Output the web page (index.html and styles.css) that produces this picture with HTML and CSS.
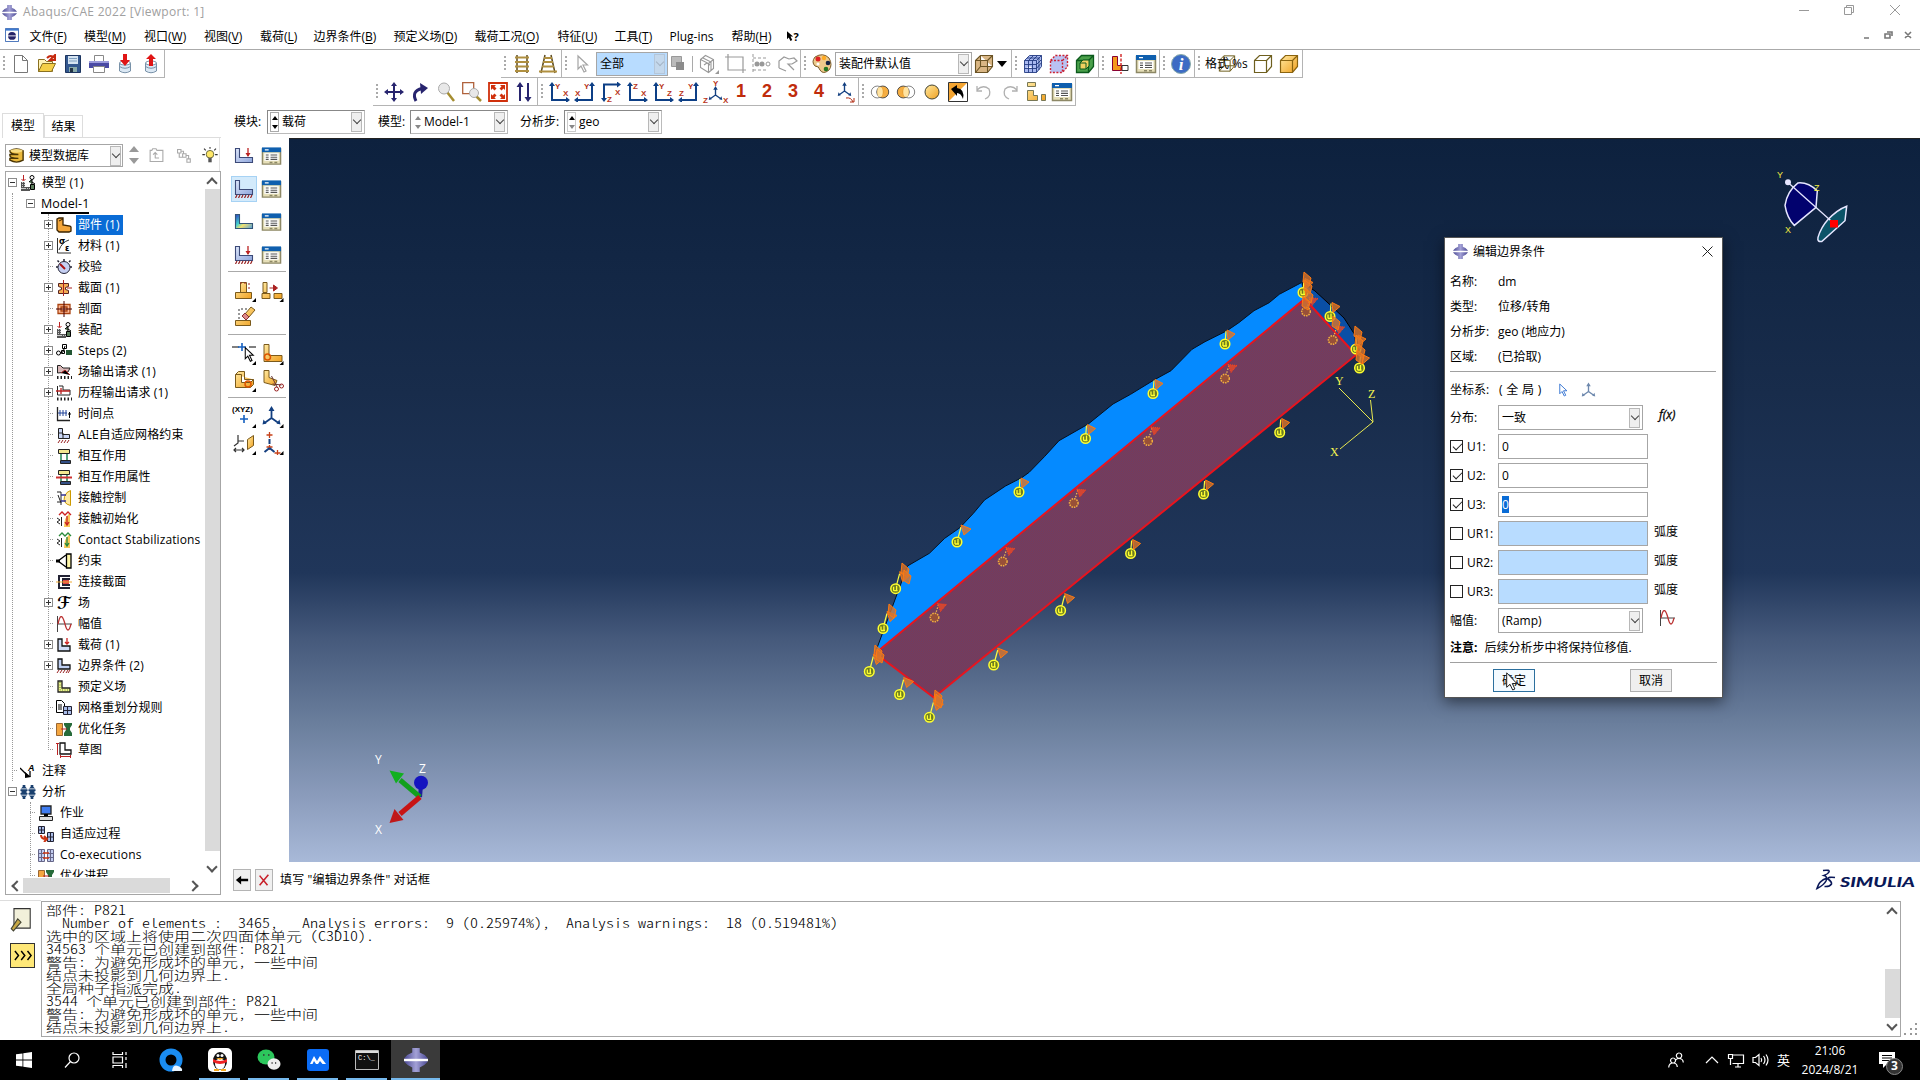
FILE: index.html
```html
<!DOCTYPE html>
<html lang="zh-CN">
<head>
  <meta charset="UTF-8">
  <meta name="viewport" content="width=device-width, initial-scale=1.0">
  <title>Abaqus/CAE 2022 [Viewport: 1]</title>
  <link rel="stylesheet" href="styles.css">
</head>
<body>
  <!-- Icon sprite -->
  <svg class="sprite">
    <defs>
      <linearGradient id="gold" x1="0" y1="0" x2="1" y2="1"><stop offset="0" stop-color="#ffe9a0"/><stop offset="1" stop-color="#f0a020"/></linearGradient>
      <linearGradient id="steel" x1="0" y1="0" x2="1" y2="1"><stop offset="0" stop-color="#dde6fa"/><stop offset="1" stop-color="#8fa6dc"/></linearGradient>
      <linearGradient id="rainbow" x1="0" y1="0" x2="1" y2="1"><stop offset="0" stop-color="#3040c0"/><stop offset=".4" stop-color="#40d0d0"/><stop offset=".6" stop-color="#f0e070"/><stop offset="1" stop-color="#50a0e0"/></linearGradient>
      <linearGradient id="orb" x1="0" x2="1"><stop offset="0" stop-color="#4c4a94"/><stop offset=".5" stop-color="#a3a1d6"/><stop offset="1" stop-color="#4c4a94"/></linearGradient>
      <!-- viewport symbols -->
      <g id="bc"><path class="bc-line" d="M0 0l1-13"/><circle class="bc-dot" r="4.800"/><path class="bc-mark" d="M-2-2v4M1-3v5M-2 2h4"/><path class="bc-cone" d="M2-14l8 4-7 6z"/></g>
      <g id="bcs"><path class="bc-line" d="M0 0l4-15"/><circle class="bc-dot" r="4.800"/><path class="bc-mark" d="M-2-2v4M1-3v5M-2 2h4"/><path class="bc-cone" d="M4-17l10 4-7 6z"/></g>
      <g id="bcd"><path class="bc-line dash" d="M0 0l4-13"/><circle class="bc-dot dim" r="4.300"/><path class="bc-cone red" d="M3-14l9 1-6 7z"/></g>
      <g id="cone"><path class="bc-cone" d="M-3-7l7 6-2 8-6-4z"/></g>
    </defs>
    <symbol id="abaqus" viewBox="0 0 16 16"><path fill="url(#orb)" d="M5.500 0h5v3q3 1 5.200 3.600v2.800Q13.500 12 10.500 13v3h-5v-3Q2.500 12 .3 9.400V6.600Q2.500 4 5.500 3z"/><path fill="#fff" d="M0 7.200h16v1.600H0z"/></symbol>
    <symbol id="winicon" viewBox="0 0 16 16"><path fill="#fff" stroke="#2d5fb0" d="M.5.500h15v15H.5z"/><path fill="#3f7bd0" d="M1 1h14v2H1z"/><circle cx="8" cy="9" r="4.500" fill="#26246a"/><path stroke="#fff" d="M3 9h10"/></symbol>
    <symbol id="new" viewBox="0 0 20 20"><path fill="#fff" stroke="#777" d="M3.500 1.500h8l5 5v12h-13zM11.500 1.500v5h5"/></symbol>
    <symbol id="open" viewBox="0 0 20 20"><path fill="#fff3b8" stroke="#8a7020" d="M1.500 17.500v-12h6l2 2h6v10z"/><path fill="#f5cf48" stroke="#8a7020" d="M1.500 17.500l4-8h13l-4 8z"/><path d="M10 4q4-4 7 0M18 1v5h-5z" stroke="#c62a10" fill="none" stroke-width="2"/></symbol>
    <symbol id="save" viewBox="0 0 20 20"><path fill="#33588f" stroke="#1d355f" d="M2.500 1.500h15v17h-15z"/><path fill="#d5e4f2" d="M5 2h10v8H5z"/><path stroke="#7fa0c0" d="M6 4.500h8M6 7h8"/><path fill="#8aa" d="M6 13h8v5H6z"/><path fill="#234" d="M7 14h3v4H7z"/></symbol>
    <symbol id="print" viewBox="0 0 20 20"><path fill="#fff" stroke="#888" d="M5.500 1.500h9v6h-9z"/><path fill="#4a4aa4" d="M0 7h20v7H0z"/><path fill="#9c9cdc" d="M0 7h20v2H0z"/><path fill="#fff" stroke="#888" d="M4.500 12.500h11v6h-11z"/></symbol>
    <symbol id="dbin" viewBox="0 0 20 20"><path fill="#dbe8f4" stroke="#7891a8" d="M4.500 9v8q5.500 3.500 11 0V9M4.500 12.500q5.500 3.500 11 0"/><ellipse cx="10" cy="9" rx="5.500" ry="2" fill="#fff" stroke="#7891a8"/><path fill="#e01515" d="M8 0h4v6h3l-5 6-5-6h3z"/></symbol>
    <symbol id="dbout" viewBox="0 0 20 20"><path fill="#dbe8f4" stroke="#7891a8" d="M4.500 9v8q5.500 3.500 11 0V9M4.500 12.500q5.500 3.500 11 0"/><ellipse cx="10" cy="9" rx="5.500" ry="2" fill="#fff" stroke="#7891a8"/><path fill="#e01515" d="M8 12h4V5h3l-5-5-5 5h3z"/></symbol>
    <symbol id="ladder" viewBox="0 0 20 20"><path stroke="#5b4a20" stroke-width="1.500" fill="none" d="M5 1v18M15 1v18"/><path stroke="#b09040" stroke-width="1.800" d="M3 3.500h14M3 8h14M3 12.500h14M3 17h14"/></symbol>
    <symbol id="rail" viewBox="0 0 20 20"><path stroke="#5b4a20" stroke-width="1.500" fill="none" d="M7 1L3 19M13 1l4 18"/><path stroke="#b09040" stroke-width="1.800" d="M6 4h8M5 8h10M4 12.500h12M1 17.500h18"/></symbol>
    <symbol id="cursor" viewBox="0 0 20 20"><path fill="#fff" stroke="currentColor" stroke-width="1.200" d="M5 2v13l3-3 3 6 2-1-3-6h4.500z"/></symbol>
    <symbol id="overlap" viewBox="0 0 20 20"><path fill="#bbb" stroke="#999" d="M2.500 2.500h10v10h-10z"/><path fill="#8c8c8c" d="M7 8h8v8H7z"/></symbol>
    <symbol id="cube" viewBox="0 0 20 20"><path fill="var(--f,none)" stroke="currentColor" stroke-width="1.200" d="M1.500 6.500l5-5h12v11l-5 6h-12zM1.500 6.500h12v12M13.500 6.500l5-5"/></symbol>
    <symbol id="wire" viewBox="0 0 20 20"><path fill="var(--f,none)" stroke="currentColor" stroke-width="1.100" d="M1.500 6.500l5-5h12v11l-5 6h-12zM1.500 6.500h12v12M13.500 6.500l5-5M6.500 1.500v11h12M6.500 12.500l-5 6"/></symbol>
    <symbol id="selcube" viewBox="0 0 20 20"><path fill="none" stroke="#999" stroke-width="1.100" d="M1.500 5.500l5-4 8 4v9l-5 4-8-5zM1.500 5.500l8 4v9M9.500 9.500l5-4M4 4l8 4v8M5 11l3-2 3 2"/><path fill="#999" d="M20 20v-4l-4 4z"/></symbol>
    <symbol id="meshcube" viewBox="0 0 20 20"><path fill="#a8b8f0" stroke="#223a80" stroke-width=".9" d="M1.500 6.500l5-5h12v11l-5 6h-12zM1.500 6.500h12v12M13.500 6.500l5-5M5.500 6.500v12M9.500 6.500v12M1.500 10.500h12l5-5M1.500 14.500h12l5-6M5.500 6.500l5-5M9.500 6.500l5-5M4 4h12v12"/></symbol>
    <symbol id="redcube" viewBox="0 0 20 20"><path fill="#b9c2f2" stroke="#cc2233" stroke-width="1.400" stroke-dasharray="2 1.500" d="M1.500 6.500l5-5h12v11l-5 6h-12zM1.500 6.500h12v12M13.500 6.500l5-5"/></symbol>
    <symbol id="greencube" viewBox="0 0 20 20"><path fill="#4aa04a" stroke="#0b5a1c" stroke-width="1.300" d="M1.500 6.500l5-5h12v11l-5 6h-12zM1.500 6.500h12v12M13.500 6.500l5-5"/><path fill="#f0d060" stroke="#0b5a1c" d="M5 9h6v6H5zM5 9l3-3h6v6l-3 3"/></symbol>
    <symbol id="selrect" viewBox="0 0 20 20"><path fill="none" stroke="#999" stroke-width="1.200" d="M3 0v6M0 3h18v13H3V5M15 16h6M18 13v6"/></symbol>
    <symbol id="seldots" viewBox="0 0 20 20"><path fill="none" stroke="#999" stroke-dasharray="3 2" d="M2 4h14M2 16h14M2 0v18"/><circle cx="6" cy="10" r="2.500" fill="#999"/><circle cx="11" cy="10" r="2.500" fill="#999"/><circle cx="17" cy="10" r="2" fill="none" stroke="#999"/></symbol>
    <symbol id="lasso" viewBox="0 0 20 20"><path fill="none" stroke="#999" stroke-width="1.200" d="M2 14V7l5-4 5 2 5-1 3 3-5 3M2 14l7 3M15 10h-4l6 6"/></symbol>
    <symbol id="palette" viewBox="0 0 20 20"><path fill="#ecc98b" stroke="#7a5a28" d="M3 3q8-5 14 1 4 7 0 12-6 5-9 0-1-4-5-4-4-4 0-9z"/><circle cx="6" cy="5" r="2.500" fill="#d22"/><circle cx="12" cy="4" r="2.200" fill="#fa2"/><circle cx="16" cy="9" r="2.300" fill="#124"/><circle cx="14" cy="15" r="2.300" fill="#272"/><circle cx="6" cy="10" r="1.500" fill="#fff"/></symbol>
    <symbol id="table" viewBox="0 0 22 20"><path fill="#e6dfb8" stroke="#8d8866" stroke-width="1.500" d="M1.500 2.500h19v16h-19z"/><path fill="#0f5fae" d="M1 1h20v5H1z"/><path fill="#fff" d="M4 3h4v1.300H4zM3.500 7h15v8h-15z"/><path stroke="#555" stroke-width="1.200" d="M5 9h3M10 9h7M5 11.300h3M10 11.300h7M5 13.500h3M10 13.500h7"/><path fill="#8d8866" d="M9 16h3v1.500H9zM14 16h3v1.500h-3z"/></symbol>
    <symbol id="partcut" viewBox="0 0 20 20"><path fill="#f59a1c" stroke="#803" d="M2.500 2.500h5v9h4v5h-9z"/><path fill="#fff" stroke="#333" d="M12 11.500h6v5h-6z"/><path stroke="#c11" stroke-width="1.300" stroke-dasharray="3 1.500" d="M11 0v20"/></symbol>
    <symbol id="pan" viewBox="0 0 20 20"><path stroke="#27246e" stroke-width="2" d="M10 2v16M2 10h16"/><path fill="#27246e" d="M10 0l3 4H7zM10 20l3-4H7zM0 10l4-3v6zM20 10l-4-3v6z"/></symbol>
    <symbol id="rotate" viewBox="0 0 20 20"><path fill="none" stroke="#27246e" stroke-width="3" d="M6 19Q1 9 12 6.500"/><path fill="#27246e" d="M10 1l8 5-7 6z"/></symbol>
    <symbol id="mag" viewBox="0 0 20 20"><path stroke="#a58d30" stroke-width="2.500" d="M11 10l7 9"/><circle cx="8" cy="6.500" r="5.500" fill="#e8e8e8" stroke="#aaa"/></symbol>
    <symbol id="magbox" viewBox="0 0 20 20"><path fill="none" stroke="#b0623c" stroke-width="1.300" d="M.7.700h11v11h-11z"/><path stroke="#a58d30" stroke-width="2.500" d="M14 14l5 5"/><circle cx="12" cy="11" r="4.500" fill="#e8e8e8" stroke="#aaa"/></symbol>
    <symbol id="fit" viewBox="0 0 20 20"><path fill="#fff" stroke="#d0300c" stroke-width="1.800" d="M1 1h18v18H1z"/><path fill="#d0300c" d="M3 3h5L6.500 4.500l2 2-2 2-2-2L3 8zM17 3h-5l1.500 1.500-2 2 2 2 2-2L17 8zM3 17h5l-1.500-1.500 2-2-2-2-2 2L3 12zM17 17h-5l1.500-1.500-2-2 2-2 2 2L17 12z"/></symbol>
    <symbol id="updown" viewBox="0 0 20 20"><path stroke="#27246e" stroke-width="2" d="M6 4v15M14 1v15"/><path fill="#27246e" d="M6 0l3.500 5h-7zM14 20l3.500-5h-7z"/></symbol>
    <symbol id="axL" viewBox="0 0 22 20"><path fill="none" stroke="#0d3f86" stroke-width="2" d="M4 3v15h15"/><path fill="#0d3f86" d="M4 0l3 4H1zM22 18l-4-3v6z"/></symbol>
    <symbol id="axR" viewBox="0 0 22 20"><path fill="none" stroke="#0d3f86" stroke-width="2" d="M18 3v15H3"/><path fill="#0d3f86" d="M18 0l3 4h-6zM0 18l4-3v6z"/></symbol>
    <symbol id="axD" viewBox="0 0 22 20"><path fill="none" stroke="#0d3f86" stroke-width="2" d="M18 2.500H4V17"/><path fill="#0d3f86" d="M4 20l3-4H1zM21 2.500l-4-3v6z"/></symbol>
    <symbol id="tri" viewBox="0 0 20 20"><path fill="none" stroke="currentColor" stroke-width="1.800" d="M10 3v9L3 17M10 12l7 5"/><path fill="currentColor" d="M10 0l3 5H7zM1 18.500l1-5 3 4zM19 18.500l-1-5-3 4z"/></symbol>
    <symbol id="or" viewBox="0 0 24 20"><circle cx="9" cy="10" r="6.500" fill="#fff" stroke="#777"/><circle cx="15" cy="10" r="6.500" fill="#f4a020" fill-opacity=".85" stroke="#444"/><ellipse cx="12" cy="10" rx="3" ry="5.500" fill="#ffe3a0"/></symbol>
    <symbol id="dot" viewBox="0 0 20 20"><circle cx="10" cy="10" r="7" fill="url(#gold)" stroke="#443"/></symbol>
    <symbol id="flip" viewBox="0 0 20 20"><path fill="#fff" stroke="#333" d="M.5.500h19v19H.5z"/><path fill="#f4a532" d="M1 19V1h18z"/><path d="M3 7l6-4v3q8 1 6 11-2-6-6-6v3z"/></symbol>
    <symbol id="undo" viewBox="0 0 20 20"><path fill="none" stroke="#b0b0b0" stroke-width="1.300" d="M3 4v5h5M3 8q6-6 12-1 3 7-4 10"/></symbol>
    <symbol id="parts" viewBox="0 0 22 20"><path fill="url(#gold)" stroke="#775" d="M2.500.500h8v4h-8zM2.500 8.500h6v5h4v5h-10zM16.500 12.500h4v6h-4z"/></symbol>
    <!-- L shaped part variants -->
    <symbol id="lpart" viewBox="0 0 20 20"><path fill="var(--f,url(#steel))" stroke="currentColor" stroke-width="1.100" d="M1.500 2.500h4v9h13v5h-17z"/></symbol>
    <symbol id="ticks" viewBox="0 0 20 20"><path stroke="#922" stroke-width="1.200" d="M3 17l-1.500 3M6 17l-1.500 3M9 17l-1.500 3M12 17l-1.500 3M15 17l-1.500 3M18 17l-1.500 3"/></symbol>
    <symbol id="down" viewBox="0 0 20 20"><path stroke="#b22" d="M14 2v8" stroke-width="1.300"/><path fill="#b22" d="M14 11l-2.500-4h5z"/></symbol>
    <symbol id="db" viewBox="0 0 18 18"><path fill="#e9b83c" stroke="#4a3505" stroke-width="1.500" d="M2 4q7-4 14 0v10q-7 4-14 0V12h9q-9 0-9-3V8h9q-9 0-9-4z"/><ellipse cx="9" cy="4" rx="6.500" ry="2" fill="#f8dc80"/></symbol>
    <symbol id="bulb" viewBox="0 0 20 20"><path stroke="#333" stroke-width="1.300" d="M10 0v2M1 9h3M16 9h3M3 2l2 2M17 2l-2 2"/><circle cx="10" cy="8.500" r="4.500" fill="#ffe868" stroke="#553"/><path fill="#555" d="M8 13h4v5H8z"/></symbol>
    <symbol id="folder" viewBox="0 0 20 20"><path fill="none" stroke="#aaa" stroke-width="1.300" d="M2.500 17V4h2l1-2h4l1 2h7v13zM8 13h5M8.500 13V7M6 9l2.500-2.500L11 9"/></symbol>
    <symbol id="chain" viewBox="0 0 20 20"><path fill="none" stroke="#aaa" stroke-width="1.300" d="M3 3h4v4H3zM9 8h4v4H9zM14 14h4v4h-4zM7 5h3v3M13 10h3v4M5 7v5h4"/></symbol>
    <!-- 16px tree icons -->
    <symbol id="t-model" viewBox="0 0 16 16"><path stroke="#b22" d="M3.500 0v5M1.500 4l2 2 2-2" fill="none"/><path fill="#555" d="M1 7h4v5h5v4H1z"/><path stroke="#ccc" stroke-dasharray="1 1" d="M2.500 7v8M4.500 7v8M1 13.500h9"/><circle cx="12" cy="2.500" r="2" fill="#fff" stroke="#000"/><path d="M9 7l3-2.500V9M12 7l3 2M10.500 9.500h4v5h-4z" stroke="#000" fill="#5c7d5c"/></symbol>
    <symbol id="t-part" viewBox="0 0 16 16"><path fill="#f2a53a" stroke="#3a2300" stroke-width="1.300" d="M1 2l2-1h4v7l7 1 1 1v4l-2 1H3l-2-2z"/><path fill="none" stroke="#3a2300" d="M3 4l4-2"/></symbol>
    <symbol id="t-mat" viewBox="0 0 16 16"><path fill="none" stroke="#333" d="M1.500 0v15H15M3 12q3-8 10-10"/></symbol>
    <symbol id="t-cal" viewBox="0 0 16 16"><circle cx="8" cy="8.500" r="6" fill="#c5cff2" stroke="#223"/><path stroke="#223" stroke-width="1.500" d="M0 8h2M14 8h2M8 0v2M3 3L1.500 1.500M13 3l1.500-1.500"/><path stroke="#a11" stroke-width="2" d="M9 10L4 5"/></symbol>
    <symbol id="t-sec" viewBox="0 0 16 16"><path fill="#f5ad55" stroke="#522" d="M2.500 3.500h10v3l-3 1v2l3 1v3h-10v-3l3-1v-2l-3-1z"/><path stroke="#a22" d="M7.500 0v16M11 8h5"/></symbol>
    <symbol id="t-prof" viewBox="0 0 16 16"><path fill="#fb9" stroke="#a41" stroke-width="1.300" d="M2 3.500h12v9H2zM5 6h6v4H5z"/><path stroke="#400" d="M8 0v16M0 8h16"/></symbol>
    <symbol id="t-step" viewBox="0 0 16 16"><circle cx="2.500" cy="10" r="2" fill="#fff" stroke="#000"/><path fill="#fff" stroke="#000" d="M4 10l3-1M7 9l2-6M6.500 1.500h4v4h-4zM5.500 7.500h3v3h-3z"/><path fill="#253" d="M10 7h6v5h-6z"/></symbol>
    <symbol id="t-out" viewBox="0 0 16 16"><path fill="#d8b8b8" stroke="#222" d="M1.500 9V1.500h3L7 4h7l-2 4z"/><path stroke="#222" stroke-dasharray="1.500 2" stroke-width="3" d="M1 13.500h15"/><path stroke="#a22" d="M5 9l4-3 5 5"/></symbol>
    <symbol id="t-hist" viewBox="0 0 16 16"><path fill="none" stroke="#222" d="M1.500 1v9H14V5H7V1H3"/><path stroke="#222" stroke-dasharray="1.500 2" stroke-width="3" d="M1 14h15"/><path stroke="#b22" stroke-width="1.300" d="M0 6h14M5 3v6"/></symbol>
    <symbol id="t-time" viewBox="0 0 16 16"><path fill="none" stroke="#222" stroke-width="1.300" d="M1.500 1v13.500H14"/><path stroke="#249" d="M2 7h9M4 4v6M7 4v6M10 4v6"/><path stroke="#000" d="M13.500 6v6M12 8h3"/></symbol>
    <symbol id="t-ale" viewBox="0 0 16 16"><path fill="#c9d6f5" stroke="#222" d="M2.500 1.500h4v6h7v4h-11zM2 6h5v6"/><path stroke="#922" d="M4 13l-2 3M7 13l-2 3M10 13l-2 3M13 13l-2 3"/></symbol>
    <symbol id="t-int" viewBox="0 0 16 16"><path fill="#f2e890" stroke="#222" d="M2.500 1.500h11v4h-11z"/><path fill="#334f86" stroke="#222" d="M4.500 12.500h10v3h-10z"/><path fill="none" stroke="#285" stroke-width="1.500" d="M5 6v6M11 6v6"/></symbol>
    <symbol id="t-ctrl" viewBox="0 0 16 16"><path stroke="#222" d="M1 2h4v13M2 5l3 8M1 12h3" fill="none"/><path fill="#ffe9a0" stroke="#c90" d="M14.500.500v15q-8-2-6-9 2-5 6-6z"/><path stroke="#339" stroke-width="1.500" d="M5 5h5M5 11h5"/></symbol>
    <symbol id="t-init" viewBox="0 0 16 16"><path stroke="#222" d="M1 7l3 2-3 2 3 2M5.500 6v9" fill="none"/><path fill="#f7c85a" d="M14 2v14H8q0-10 6-14z"/><path fill="none" stroke="var(--c,#c22)" stroke-width="1.300" d="M3 4l3-3 3 3 3-3 3 3M11 5v8M9 11l2 3 2-3"/></symbol>
    <symbol id="t-cons" viewBox="0 0 16 16"><path fill="#fff7a8" stroke="#000" stroke-width="1.300" d="M10.500 1h4.500v14h-4.500z"/><path fill="none" stroke="#000" stroke-width="1.300" d="M10 2L2 8l8 6"/><path d="M0 6.500h4v3H0z"/></symbol>
    <symbol id="t-conn" viewBox="0 0 16 16"><path fill="none" stroke="#223" stroke-width="2" d="M14 2H3v12h11M14 5H7v6h7"/><path fill="#d44" d="M7 6h6v4H7z"/><path stroke="#ea3" d="M0 8h16"/></symbol>
    <symbol id="t-amp" viewBox="0 0 16 16"><path stroke="#444" d="M1.500 0v16M1 8h15" fill="none"/><path fill="none" stroke="#b33" stroke-width="1.300" d="M2 8Q5-7 9 8q3 12 6 0"/></symbol>
    <symbol id="t-load" viewBox="0 0 16 16"><path fill="#cfdcf8" stroke="#111" stroke-width="1.300" d="M2 2h4v7h8v5H2z"/><path stroke="#c22" stroke-width="1.300" fill="none" d="M11 1v6M9 5l2 2 2-2"/></symbol>
    <symbol id="t-bc" viewBox="0 0 16 16"><path fill="#bfd0f4" stroke="#111" stroke-width="1.300" d="M2 1h4v6h8v4H2z"/><path stroke="#922" d="M3 12l-2 3M6 12l-2 3M9 12l-2 3M12 12l-2 3M14 12l-2 3"/></symbol>
    <symbol id="t-pre" viewBox="0 0 16 16"><path fill="#f3f08a" stroke="#222" stroke-width="1.300" d="M2 2h4v7h8v4H2z"/><path stroke="#484" stroke-dasharray="1 1.500" fill="none" d="M4 3v8h10"/></symbol>
    <symbol id="t-mesh" viewBox="0 0 16 16"><path fill="#fff" stroke="#000" d="M.5.500h5l3 3v9h-8z"/><path stroke="#000" d="M2 5h4M2 7h4M2 9h4"/><path fill="#a9bce8" stroke="#223" d="M7.500 6.500h8v8h-8zM7.500 10.500h8M11.500 6.500v8"/></symbol>
    <symbol id="t-opt" viewBox="0 0 16 16"><path fill="#f4a640" stroke="#963" d="M.5 2.500h6v12h-6z"/><path fill="#276b3a" d="M8 2h8v2l-2 3v2l2 3v3H8v-3l2-3V7L8 4z"/><path stroke="#b22" d="M5 8h6"/></symbol>
    <symbol id="t-sk" viewBox="0 0 16 16"><path fill="#fff" stroke="#111" stroke-width="1.300" d="M4 1h5v7h6v4H4z"/><path stroke="#b22" fill="none" d="M1.500 1v12M0 1.500h3M4 14.500h11M4.500 13v3M14.500 13v3"/></symbol>
    <symbol id="t-note" viewBox="0 0 16 16"><path stroke="#000" stroke-width="1.300" fill="none" d="M0 5l8 8M10 8v6"/><path d="M5 9l6 5-6 1z"/></symbol>
    <symbol id="t-ana" viewBox="0 0 18 16"><path fill="#193f6e" d="M3 0h3v2q3 2 2.500 5l-2 1 2 1q.5 3-2.500 5v2H3v-2Q0 12 .5 9l2-1-2-1Q0 4 3 2zM12 0h3v2q3 2 2.500 5l-2 1 2 1q.5 3-2.500 5v2h-3v-2q-3-2-2.500-5l2-1-2-1Q9 4 12 2z"/><path fill="#fff" d="M0 4h18v.8H0zM0 11h18v.8H0z"/></symbol>
    <symbol id="t-job" viewBox="0 0 16 16"><path fill="#3f7cf0" stroke="#222" stroke-width="1.300" d="M3 1h10v8H3z"/><path fill="#ddd" stroke="#222" d="M1.500 11.500h13v4h-13z"/><path d="M6 9h4v2H6z"/></symbol>
    <symbol id="t-ada" viewBox="0 0 16 16"><path fill="#a9bce8" stroke="#223" d="M.5.500h6v7h-6zM.5 4h6M3.500.500v7M9.500 6.500h6v9h-6zM9.500 11h6M12.500 6.500v9"/><path fill="none" stroke="#c31" stroke-width="2" d="M3 9q0 4 5 4M6 10l3 3-3 3"/></symbol>
    <symbol id="t-co" viewBox="0 0 16 16"><path fill="#c3cdf0" stroke="#668" d="M.5 2.500h6v12h-6zM.5 6.500h6M.5 10.500h6M3.500 2.500v12M9.500 2.500h6v12h-6zM9.500 6.500h6M9.500 10.500h6M12.500 2.500v12"/><path stroke="#c31" stroke-width="1.500" d="M5 6h6M5 11h6"/></symbol>
  </svg>

  <header class="titlebar">
    <svg class="i15"><use href="#abaqus"/></svg>
    <span class="title">Abaqus/CAE 2022 [Viewport: 1]</span>
    <svg class="winbtns" viewBox="0 0 110 14"><path d="M0 7.500h10M45.500 4.500h7v7h-7zM47.500 4V2.500h7v7H53M91 2l10 10M101 2L91 12"/></svg>
  </header>

  <nav class="menubar">
    <svg class="i15"><use href="#winicon"/></svg>
    <span>文件(<u>F</u>)</span><span>模型(<u>M</u>)</span><span>视口(<u>W</u>)</span><span>视图(<u>V</u>)</span><span>载荷(<u>L</u>)</span><span>边界条件(<u>B</u>)</span><span>预定义场(<u>D</u>)</span><span>载荷工况(<u>O</u>)</span><span>特征(<u>U</u>)</span><span>工具(<u>T</u>)</span><span>Plug-ins</span><span>帮助(<u>H</u>)</span>
    <span class="whats"><svg viewBox="0 0 8 12"><path d="M0 0v9l2-2 2 4 2-1-2-4h3z"/></svg>?</span>
    <svg class="mdibtns" viewBox="0 0 50 12"><path d="M1 9h5M22 5h5v4h-5zM24 3h5v4M42 3l6 6M48 3l-6 6"/></svg>
  </nav>

  <div class="toolrow">
    <div class="group"><svg><use href="#new"/></svg><svg><use href="#open"/></svg><svg><use href="#save"/></svg><svg><use href="#print"/></svg><svg><use href="#dbin"/></svg><svg><use href="#dbout"/></svg></div>
    <div class="group push1"><svg><use href="#ladder"/></svg><svg><use href="#rail"/></svg></div>
    <div class="group"><svg class="grey"><use href="#cursor"/></svg><div class="combo blue w72">全部<i class="drop"></i></div><svg><use href="#overlap"/></svg><span class="vsep"></span><svg><use href="#selcube"/></svg><svg><use href="#selrect"/></svg><svg><use href="#seldots"/></svg><svg><use href="#lasso"/></svg></div>
    <div class="group"><svg><use href="#palette"/></svg><div class="combo w137">装配件默认值<i class="drop"></i></div><svg class="tan"><use href="#wire"/></svg><span class="tri-down"></span></div>
    <div class="group"><svg><use href="#meshcube"/></svg><svg><use href="#redcube"/></svg><svg><use href="#greencube"/></svg></div>
    <div class="group"><svg><use href="#partcut"/></svg><svg><use href="#table"/></svg></div>
    <div class="group"><svg viewBox="0 0 20 20"><circle cx="10" cy="10" r="9.500" fill="#3d6cc4" stroke="#8aa"/><text x="10" y="16" text-anchor="middle" class="t-info">i</text></svg></div>
    <div class="group"><div class="fmt"><svg class="olive"><use href="#wire"/></svg><span>格式 %s</span></div><svg class="olive"><use href="#cube"/></svg><svg class="yellow"><use href="#cube"/></svg></div>
  </div>

  <div class="toolrow second">
    <div class="group"><svg><use href="#pan"/></svg><svg><use href="#rotate"/></svg><svg><use href="#mag"/></svg><svg><use href="#magbox"/></svg><svg><use href="#fit"/></svg><svg><use href="#updown"/></svg></div>
    <div class="group axes">
      <svg viewBox="0 0 22 20"><use href="#axL"/><text x="7" y="7">Y</text><text x="15" y="14">X</text></svg>
      <svg viewBox="0 0 22 20"><use href="#axR"/><text x="10" y="7">Y</text><text x="1" y="14">X</text></svg>
      <svg viewBox="0 0 22 20"><use href="#axD"/><text x="15" y="13">X</text><text x="7" y="20">Z</text></svg>
      <svg viewBox="0 0 22 20"><use href="#axL"/><text x="7" y="7">Z</text><text x="15" y="14">X</text></svg>
      <svg viewBox="0 0 22 20"><use href="#axL"/><text x="7" y="7">Y</text><text x="15" y="14">Z</text></svg>
      <svg viewBox="0 0 22 20"><use href="#axR"/><text x="10" y="7">Y</text><text x="1" y="14">Z</text></svg>
      <svg viewBox="0 0 22 20" class="navy"><use href="#tri" x="4" y="4" width="15" height="15"/><text x="9" y="4">Y</text><text x="-1" y="21">Z</text><text x="19" y="21">X</text></svg>
      <b>1</b><b>2</b><b>3</b><b>4</b>
      <svg viewBox="0 0 22 20" class="navy"><use href="#tri" x="3" y="0" width="15" height="15"/><path d="M12 16q5-1 7 4M20 16v4h-4" fill="none" stroke="#b02a10"/></svg>
    </div>
    <div class="group"><svg><use href="#or"/></svg><svg class="mirror"><use href="#or"/></svg><svg><use href="#dot"/></svg><svg><use href="#flip"/></svg><svg><use href="#undo"/></svg><svg class="mirror"><use href="#undo"/></svg><svg><use href="#parts"/></svg><svg><use href="#table"/></svg></div>
  </div>

  <main class="main">
    <!-- Model tree -->
    <aside class="side">
      <div class="tabs"><span class="tab active">模型</span><span class="tab">结果</span></div>
      <div class="side-tools">
        <div class="combo dbcombo"><svg><use href="#db"/></svg>模型数据库<i class="drop"></i></div>
        <span class="spin big"></span>
        <svg><use href="#folder"/></svg><svg><use href="#chain"/></svg><svg><use href="#bulb"/></svg>
      </div>
      <div class="treebox">
        <div class="tree-row">
          <div class="tree">
            <div class="n l0"><i class="exp minus"></i><svg><use href="#t-model"/></svg>模型 (1)</div>
            <div class="branch root">
              <div class="n l1"><i class="exp minus"></i><span class="current">Model-1</span></div>
              <div class="branch kids">
                <div class="n l2"><i class="exp"></i><svg><use href="#t-part"/></svg><span class="sel">部件 (1)</span></div>
                <div class="n l2"><i class="exp"></i><svg viewBox="0 0 16 16"><use href="#t-mat"/><text x="3" y="6" class="t-s">σ</text><text x="9" y="13" class="t-s">ε</text></svg>材料 (1)</div>
                <div class="n l2"><i class="leaf"></i><svg><use href="#t-cal"/></svg>校验</div>
                <div class="n l2"><i class="exp"></i><svg><use href="#t-sec"/></svg>截面 (1)</div>
                <div class="n l2"><i class="leaf"></i><svg><use href="#t-prof"/></svg>剖面</div>
                <div class="n l2"><i class="exp"></i><svg><use href="#t-model"/></svg>装配</div>
                <div class="n l2"><i class="exp"></i><svg><use href="#t-step"/></svg>Steps (2)</div>
                <div class="n l2"><i class="exp"></i><svg><use href="#t-out"/></svg>场输出请求 (1)</div>
                <div class="n l2"><i class="exp"></i><svg><use href="#t-hist"/></svg>历程输出请求 (1)</div>
                <div class="n l2"><i class="leaf"></i><svg><use href="#t-time"/></svg>时间点</div>
                <div class="n l2"><i class="leaf"></i><svg><use href="#t-ale"/></svg>ALE自适应网格约束</div>
                <div class="n l2"><i class="leaf"></i><svg><use href="#t-int"/></svg>相互作用</div>
                <div class="n l2"><i class="leaf"></i><svg><use href="#t-int"/><path d="M0 8.500h16" stroke="#c33" stroke-width="2"/></svg>相互作用属性</div>
                <div class="n l2"><i class="leaf"></i><svg><use href="#t-ctrl"/></svg>接触控制</div>
                <div class="n l2"><i class="leaf"></i><svg><use href="#t-init"/></svg>接触初始化</div>
                <div class="n l2"><i class="leaf"></i><svg class="green"><use href="#t-init"/></svg>Contact Stabilizations</div>
                <div class="n l2"><i class="leaf"></i><svg><use href="#t-cons"/></svg>约束</div>
                <div class="n l2"><i class="leaf"></i><svg><use href="#t-conn"/></svg>连接截面</div>
                <div class="n l2"><i class="exp"></i><svg viewBox="0 0 16 16"><text x="1" y="14" class="t-f">ℱ</text></svg>场</div>
                <div class="n l2"><i class="leaf"></i><svg><use href="#t-amp"/></svg>幅值</div>
                <div class="n l2"><i class="exp"></i><svg><use href="#t-load"/></svg>载荷 (1)</div>
                <div class="n l2"><i class="exp"></i><svg><use href="#t-bc"/></svg>边界条件 (2)</div>
                <div class="n l2"><i class="leaf"></i><svg><use href="#t-pre"/></svg>预定义场</div>
                <div class="n l2"><i class="leaf"></i><svg><use href="#t-mesh"/></svg>网格重划分规则</div>
                <div class="n l2"><i class="leaf"></i><svg><use href="#t-opt"/></svg>优化任务</div>
                <div class="n l2"><i class="leaf"></i><svg><use href="#t-sk"/></svg>草图</div>
              </div>
              <div class="n l0"><i class="leaf"></i><svg viewBox="0 0 16 16"><use href="#t-note"/><text x="8" y="8" class="t-a">A</text></svg>注释</div>
            </div>
            <div class="n l0"><i class="exp minus"></i><svg><use href="#t-ana"/></svg>分析</div>
            <div class="branch jobs">
              <div class="n l1"><i class="leaf"></i><svg><use href="#t-job"/></svg>作业</div>
              <div class="n l1"><i class="leaf"></i><svg><use href="#t-ada"/></svg>自适应过程</div>
              <div class="n l1"><i class="leaf"></i><svg><use href="#t-co"/></svg><span class="wide">Co-executions</span></div>
              <div class="n l1"><i class="leaf"></i><svg><use href="#t-opt"/></svg>优化进程</div>
            </div>
          </div>
          <div class="vscroll"><i class="chev up"></i><span class="thumb"></span><i class="chev"></i></div>
        </div>
        <div class="hscroll"><i class="chev left"></i><span class="thumb"></span><i class="chev right"></i></div>
      </div>
    </aside>

    <section class="work">
      <div class="modbar">
        <label>模块:</label><div class="combo sunken"><span class="spin box"></span>载荷<i class="drop"></i></div>
        <label class="m2">模型:</label><div class="combo sunken"><span class="spin dim"></span>Model-1<i class="drop"></i></div>
        <label class="m3">分析步:</label><div class="combo sunken"><span class="spin half"></span>geo<i class="drop"></i></div>
      </div>

      <div class="canvas-row">
        <div class="toolbox">
          <div class="tb tall">
            <svg class="slate"><use href="#lpart"/><use href="#down"/></svg><svg><use href="#table"/></svg>
            <svg class="slate on" viewBox="0 0 20 20"><use href="#lpart" y="-1"/><use href="#ticks" y="-1"/></svg><svg><use href="#table"/></svg>
            <svg class="rain"><use href="#lpart"/></svg><svg><use href="#table"/></svg>
            <svg class="slate" viewBox="0 0 20 20"><use href="#lpart" y="-1"/><use href="#down" y="-1"/><use href="#ticks" y="-1"/></svg><svg><use href="#table"/></svg>
          </div>
          <div class="tb">
            <svg viewBox="0 0 20 20"><path class="gp" d="M6.500 2.500h6v10h-6zM1.500 12.500h16v6h-16z"/><path d="M6 3h8M15 3v8" stroke="#922" stroke-dasharray="2"/><path d="M22 22v-4l-4 4z"/></svg>
            <svg viewBox="0 0 20 20"><path class="gp" d="M1.500 2.500h4v10h-4zM.5 13.500h8v5h-8zM12.500 13.500h8v5h-8z"/><path d="M8 8h6M12 5l4 3-4 3z" stroke="#a22" fill="#a22"/><path d="M22 22v-4l-4 4z"/></svg>
            <svg viewBox="0 0 20 20"><path class="gp" d="M1.500 13.500h15v5h-15zM11 7l6-7 4 3-6 7z"/><path fill="#d88" stroke="#833" d="M8 9l3-3 4 4-3 3z"/><path d="M5 12V2h8" stroke="#333" stroke-dasharray="2" fill="none"/></svg>
          </div>
          <div class="tb">
            <svg viewBox="0 0 20 20" class="black"><path d="M-2 4h7M15 4h7" stroke="#000"/><path d="M8 0v8M4 4h8" stroke="#1560c0" stroke-width="1.600"/><use href="#cursor" x="7" y="3" width="17" height="17"/><path d="M22 22v-4l-4 4z"/></svg>
            <svg viewBox="0 0 20 20"><path class="gp" d="M2.500 1.500h5v11h13v6h-18z"/><circle cx="6" cy="14" r="3" fill="none" stroke="#d50" stroke-width="1.500"/><path d="M22 22v-4l-4 4z"/></svg>
            <svg viewBox="0 0 20 20"><path class="gp" d="M1.500 4.500l3-3h6v8h9v5l-3 3h-15zM1.500 4.500h6v8h9l3-3"/><circle cx="14" cy="14" r="3" fill="none" stroke="#d50" stroke-width="1.500"/><path d="M22 22v-4l-4 4z"/></svg>
            <svg viewBox="0 0 20 20"><path class="gp" d="M2.500.500h5v7l8 3-2 5-11-3z"/><path d="M10 6l6 12M11 14l9 1" stroke="#633"/><circle cx="15" cy="19" r="2" fill="none" stroke="#922"/><circle cx="20" cy="16" r="2" fill="none" stroke="#922"/></svg>
          </div>
          <div class="tb">
            <svg viewBox="0 0 20 20"><text x="-2" y="6" class="xyz">(XYZ)</text><path d="M10 9v8M6 13h8" stroke="#1560c0" stroke-width="1.600"/><path d="M22 22v-4l-4 4z"/></svg>
            <svg viewBox="0 0 20 20" class="navy"><use href="#tri"/><path d="M22 22v-4l-4 4z"/></svg>
            <svg viewBox="0 0 20 20"><path d="M4 2v8l-4 3M4 8h6M0 17h10M2 15l-2 2 2 2M8 15l2 2-2 2" stroke="#333" fill="none" stroke-width="1.200"/><path class="gp" d="M13.500 6.500l6-4v10l-6 4z"/><path d="M22 22v-4l-4 4z"/></svg>
            <svg viewBox="0 0 20 20"><path d="M8-1v6M5 2h6M8 12v5M5 14h6M16 17v5M13 20h6" stroke="#c64018" stroke-width="1.300"/><path d="M8 6v5M8 15l-5 4M8 15l5 4" stroke="#153f80" stroke-width="2"/><path d="M22 22v-4l-4 4z"/></svg>
          </div>
        </div>

        <div class="viewport">
          <svg class="scene" viewBox="289 138 1631 724">
            <defs>
              <pattern id="pick" width="2" height="2" patternUnits="userSpaceOnUse"><path fill="#6b3f66" d="M0 0h2v2H0z"/><path fill="#7b3a56" d="M0 0h1v1H0zM1 1h1v1H1z"/></pattern>
            </defs>
            <!-- model -->
            <path fill="#0a4fa6" stroke="#000" d="M1303 283L1315 291 1327 302 1344 318 1355 335 1356 355 1304.700 299z"/>
            <path fill="#058aff" d="M875.400 653.300L877 648 907.500 566 929.400 553.300 944.700 538.300 959.900 527.700 973.400 513.300 984.500 500 1005.500 486 1021.700 477.700 1029.200 472.300 1044.400 456.700 1059 440.700 1088.300 424 1113 404 1130.600 394.300 1154 380 1171 370.700 1192 349.300 1205 341.700 1227 330.700 1238.800 322.700 1254 310.700 1269.200 302.700 1279.300 294.300 1301.300 282.700 1304.700 299z"/>
            <path fill="none" stroke="#041020" d="M875.400 653.300L877 648 907.500 566 929.400 553.300 944.700 538.300 959.900 527.700 973.400 513.300 984.500 500 1005.500 486 1021.700 477.700 1029.200 472.300 1044.400 456.700 1059 440.700 1088.300 424 1113 404 1130.600 394.300 1154 380 1171 370.700 1192 349.300 1205 341.700 1227 330.700 1238.800 322.700 1254 310.700 1269.200 302.700 1279.300 294.300 1301.300 282.700"/>
            <path fill="url(#pick)" stroke="#e8141e" stroke-width="2" d="M875.400 653.300L1304.700 299 1356 355 933.800 697.500z"/>
            <!-- boundary condition symbols -->
            <use href="#bc" x="1225" y="344"/><use href="#bc" x="1153" y="393.500"/><use href="#bc" x="1085.500" y="438.500"/><use href="#bc" x="1019" y="492"/>
            <use href="#bcs" x="957" y="542"/><use href="#bcs" x="895.600" y="588.700"/><use href="#bcs" x="883" y="628.500"/><use href="#bcs" x="869.300" y="671.500"/><use href="#bcs" x="899.600" y="694.500"/><use href="#bcs" x="929.400" y="717.300"/>
            <use href="#bcs" x="993.700" y="665"/><use href="#bcs" x="1060.600" y="610.500"/><use href="#bc" x="1130.600" y="553.500"/><use href="#bc" x="1203.600" y="494"/><use href="#bc" x="1279.700" y="432.500"/>
            <use href="#bc" x="1359.500" y="368"/><use href="#bc" x="1330" y="316.500"/><use href="#bc" x="1303" y="292.500"/><use href="#bc" x="1356" y="349"/>
            <use href="#bcd" x="1225" y="378.500"/><use href="#bcd" x="1148" y="441"/><use href="#bcd" x="1073.800" y="503"/><use href="#bcd" x="1002.800" y="561.500"/><use href="#bcd" x="934.500" y="617.500"/><use href="#bcd" x="1306" y="311.500"/><use href="#bcd" x="1332.700" y="340"/>
            <use href="#cone" x="1307" y="279"/><use href="#cone" x="1308" y="287"/><use href="#cone" x="1309" y="296"/><use href="#cone" x="1306" y="303"/>
            <use href="#cone" x="1358" y="333"/><use href="#cone" x="1359" y="342"/><use href="#cone" x="1361" y="351"/><use href="#cone" x="1360" y="357"/><use href="#cone" x="1336" y="323"/>
            <use href="#cone" x="905" y="570"/><use href="#cone" x="907" y="577"/><use href="#cone" x="892" y="611"/><use href="#cone" x="878" y="652"/><use href="#cone" x="880" y="656"/><use href="#cone" x="938" y="697"/><use href="#cone" x="939" y="701"/>
            <!-- datum axes -->
            <path fill="none" stroke="#e8e850" d="M1339 388l34 34-2.500-22M1373 422l-33 27"/>
            <g class="datum"><text x="1335" y="385">Y</text><text x="1368" y="398">Z</text><text x="1330" y="456">X</text></g>
            <!-- view compass -->
            <path fill="#02026e" stroke="#e6e6ff" stroke-width="1.500" d="M1794.300 225.400Q1787 218 1785 205.400q2-14 13-22.500 10-1 19.300 8l-1.300 16.400z"/>
            <path fill="#0b5368" stroke="#e6e6ff" stroke-width="1.500" d="M1846.700 206.200l-1.700 14.500-23 20.700q-5 1-4-4 3-10 10-17.800 9-9.800 18.700-13.400z"/>
            <path stroke="#e6e6ff" stroke-width="1.300" d="M1788 182.500l46 41"/><circle cx="1788" cy="182.200" r="3" fill="#e6e6ff"/><path fill="#f00" d="M1830 220h8v7.500h-8z"/>
            <g class="compass"><text x="1777" y="178">Y</text><text x="1814" y="191">Z</text><text x="1785" y="233">X</text></g>
            <!-- triad -->
            <path stroke="#1c1ca0" stroke-width="4" d="M420 797l1-12"/><circle cx="421" cy="782.700" r="7" fill="#1414c0"/>
            <path stroke="#12a01c" stroke-width="5" d="M420 797l-20-17"/><path fill="#12b020" d="M389.500 770.500l14.500 3-8 10z"/>
            <path stroke="#c81414" stroke-width="5" d="M420 797l-20 17"/><path fill="#c01818" d="M389.500 823l5-14 9 11z"/>
            <g class="triad"><text x="375" y="764">Y</text><text x="419" y="773">Z</text><text x="375" y="834">X</text></g>
          </svg>

          <!-- Edit boundary condition -->
          <div class="dialog">
            <div class="dlg-title"><svg class="i15"><use href="#abaqus"/></svg><span>编辑边界条件</span><svg class="close" viewBox="0 0 11 11"><path d="M.5.500l10 10M10.500.500l-10 10"/></svg></div>
            <div class="meta"><span>名称:</span><span>dm</span><span>类型:</span><span>位移/转角</span><span>分析步:</span><span>geo (地应力)</span><span>区域:</span><span>(已拾取)</span></div>
            <div class="form">
              <div class="f csys"><span class="lab">坐标系:</span><span class="global">(全局)</span><svg class="blueink"><use href="#cursor"/></svg><svg class="steelink"><use href="#tri"/></svg></div>
              <div class="f"><span class="lab">分布:</span><div class="combo w145">一致<i class="drop"></i></div><em class="fx">f(x)</em></div>
              <div class="f"><span class="lab"><i class="chk on"></i>U1:</span><div class="input">0</div></div>
              <div class="f"><span class="lab"><i class="chk on"></i>U2:</span><div class="input">0</div></div>
              <div class="f"><span class="lab"><i class="chk on"></i>U3:</span><div class="input"><mark>0</mark></div></div>
              <div class="f"><span class="lab"><i class="chk"></i>UR1:</span><div class="input off"></div><span class="unit">弧度</span></div>
              <div class="f"><span class="lab"><i class="chk"></i>UR2:</span><div class="input off"></div><span class="unit">弧度</span></div>
              <div class="f"><span class="lab"><i class="chk"></i>UR3:</span><div class="input off"></div><span class="unit">弧度</span></div>
              <div class="f"><span class="lab">幅值:</span><div class="combo w145">(Ramp)<i class="drop"></i></div><svg class="amp"><use href="#t-amp"/></svg></div>
            </div>
            <div class="note"><b>注意:</b>后续分析步中将保持位移值.</div>
            <div class="dlg-btns"><button class="ok">确定</button><button>取消</button></div>
            <svg class="pointer" viewBox="0 0 12 19"><path d="M.7.800v14.500l3.300-3 2.700 5.700 2.200-1-2.600-5.500h4.500z"/></svg>
          </div>
        </div>
      </div>

      <div class="prompt">
        <span class="pbtn"><svg viewBox="0 0 16 16"><path d="M1 8l6-5v3.500h8v3H7V13z"/></svg></span>
        <span class="pbtn"><svg viewBox="0 0 16 16"><path d="M3 3l9 11M13 2L3 14" stroke="#c8202a" stroke-width="1.800"/></svg></span>
        <span class="ptext">填写 "编辑边界条件" 对话框</span>
        <svg class="simulia" viewBox="0 0 102 22"><path d="M8 1.500q7-1 6 1.500-1 2-5 3.500 4 1 2 5.500-2 4-9 7.500 2-6 4-7 2-2 5-3M20 8.500q-7-1-7 1.500 4 3 3.500 5-2 3-7 2.500" fill="none" stroke="#0a1858" stroke-width="1.600"/><text x="25" y="18" textLength="75" lengthAdjust="spacingAndGlyphs">SIMULIA</text></svg>
      </div>
    </section>
  </main>

  <!-- Message area -->
  <section class="messages">
    <div class="msgtabs">
      <svg class="mt" viewBox="0 0 20 24"><path fill="#f2f0da" stroke="#333" d="M3.500 1.500h15v18h-15z"/><path fill="#c7a845" stroke="#443" d="M1 20l6-9 3 3-7 8z"/></svg>
      <span class="cli"><svg viewBox="0 0 20 10"><path d="M1 0l4 5-4 5M8 0l4 5-4 5M15 0l4 5-4 5"/></svg></span>
    </div>
    <div class="log">
<pre>部件: P821
  Number of elements :  3465,   Analysis errors:  9 (0.25974%),  Analysis warnings:  18 (0.519481%)
选中的区域上将使用二次四面体单元 (C3D10).
34563 个单元已创建到部件: P821
警告: 为避免形成坏的单元, 一些中间
结点未投影到几何边界上.
全局种子指派完成.
3544 个单元已创建到部件: P821
警告: 为避免形成坏的单元, 一些中间
结点未投影到几何边界上.</pre>
      <div class="vscroll"><i class="chev up"></i><span class="thumb"></span><i class="chev"></i></div>
    </div>
    <svg class="grip" viewBox="0 0 14 14"><path d="M12 1h2M7 6h2M12 6h2M1 11h2M7 11h2M12 11h2"/></svg>
  </section>

  <footer class="taskbar">
    <div class="sys">
      <svg viewBox="0 0 16 16"><path fill="#fff" d="M0 2.300l6.500-.9v6.200H0zM7.300 1.300L16 0v7.600H7.300zM0 8.400h6.500v6.200L0 13.700zM7.300 8.400H16V16l-8.700-1.200z"/></svg>
      <svg viewBox="0 0 16 16"><circle cx="10" cy="6" r="5" class="wl"/><path class="wl" d="M6.500 9.500L1 15.500"/></svg>
      <svg viewBox="0 0 16 16"><path class="wl" d="M1 0v2.500h9.500V0M1 16v-2.500h9.500V16M1 5h9.500v6H1zM14 0v3M14 5v3M14 11v5"/></svg>
    </div>
    <div class="apps">
      <span><svg viewBox="0 0 24 24"><circle cx="12" cy="12" r="8.500" fill="none" stroke="#1a8cf0" stroke-width="6"/><path fill="#e8f4ff" d="M13 23q1-7 6-5 5 2 4 5z"/></svg></span>
      <span class="run"><svg viewBox="0 0 24 24"><rect width="24" height="24" rx="5" fill="#fff"/><ellipse cx="12" cy="13" rx="7" ry="9" fill="#111"/><ellipse cx="12" cy="16" rx="5" ry="5.500" fill="#fff"/><path fill="#e22" d="M5 11q7 4 14 0v3q-7 4-14 0z"/><circle cx="10" cy="7.500" r="1.500" fill="#fff"/><circle cx="14" cy="7.500" r="1.500" fill="#fff"/><path fill="#f5a81c" d="M8 10h8l-4 2zM6 21h5v2H6zM13 21h5v2h-5z"/></svg></span>
      <span class="run"><svg viewBox="0 0 24 24"><ellipse cx="9" cy="9" rx="8.500" ry="7.500" fill="#2cc75c"/><ellipse cx="17" cy="16" rx="6.500" ry="5.800" fill="#eee"/><path d="M6 7h1.500M11 7h1.500M14.500 15h1.200M18 15h1.200" stroke="#333" stroke-width="1.500"/></svg></span>
      <span class="run"><svg viewBox="0 0 24 24"><rect x="1" y="1" width="22" height="22" rx="3" fill="#0b6cf5"/><path d="M4 16l4-8 3 5 3-5 6 8h-3.500L14 13l-2 3h-2l-2-3-1.500 3z" fill="#fff"/></svg></span>
      <span class="run"><svg viewBox="0 0 24 24"><path fill="#111" stroke="#bbb" d="M.5 2.500h23v19H.5z"/><path fill="#ddd" d="M1 3h22v2H1z"/><text x="3" y="12" class="t-cmd">C:\_</text></svg></span>
      <span class="run cur"><svg viewBox="0 0 16 16"><use href="#abaqus"/></svg></span>
    </div>
    <div class="tray">
      <svg class="ppl" viewBox="0 0 16 16"><path class="wl" d="M11 1a2.700 2.700 0 1 0 .1 0M5 6a2.500 2.500 0 1 0 .1 0M.7 15.500Q1 11 5 11t4.300 4M7.500 8Q9 6.500 11 6.500q4 0 4.300 4"/></svg>
      <svg viewBox="0 0 16 16"><path class="wl" d="M2 11l6-6 6 6"/></svg>
      <svg viewBox="0 0 16 16"><path class="wl" d="M4 3h11.500v8.500H4.500M.5 2.500h4v4h-4zM2.500 7v6M7 15h6M10 12v3"/></svg>
      <svg viewBox="0 0 16 16"><path class="wl" d="M1 5.500h2.500L7 2.500v11L3.500 10.500H1zM9 6q1.500 2 0 4M11.500 4q3 4 0 8M14 2.500q4 5.500 0 11"/></svg>
      <span class="ime">英</span>
      <div class="clock"><span>21:06</span><span>2024/8/21</span></div>
      <div class="notif"><svg viewBox="0 0 16 16"><path fill="#fff" d="M0 0h16v12H8l-4 4v-4H0z"/><path stroke="#000" d="M3 3.500h10M3 6h10M3 8.500h7"/></svg><span class="badge">3</span></div>
    </div>
  </footer>
</body>
</html>
```

FILE: styles.css
```css
* { box-sizing: border-box; }

body {
  margin: 0;
  width: 1920px;
  height: 1080px;
  overflow: hidden;
  display: flex;
  flex-direction: column;
  background: #fff;
  color: #000;
  font: 12px/16px "Open Sans", "Noto Sans CJK SC", sans-serif;
}

svg { display: block; flex: none; overflow: visible; }
.sprite { position: absolute; width: 0; height: 0; overflow: hidden; }
.i15 { width: 15px; height: 15px; }
i { font-style: normal; flex: none; }

/* Title and menu */
.titlebar {
  height: 24px;
  display: flex;
  align-items: center;
  padding-left: 2px;
  gap: 6px;
  color: #a0a0a0;
}
.title { letter-spacing: 0.3px; flex: 1; }
.winbtns { width: 110px; height: 14px; margin-top: -4px; margin-right: 11px; fill: none; stroke: #999; }

.menubar {
  height: 26px;
  border-bottom: 1px solid #aaa;
  display: grid;
  grid-template-columns: 24.500px 54.500px 60px 60px 56px 53.500px 80px 81px 83px 57px 55px 62px 55px 1fr 57px;
  align-items: center;
  padding-left: 5px;
  white-space: nowrap;
}
.menubar .i15 { width: 14px; height: 14px; margin-top: -3px; }
.menubar u { text-underline-offset: 2px; }
.whats { display: flex; align-items: center; font-weight: 700; font-size: 11px; }
.whats svg { width: 7px; height: 11px; }
.mdibtns { width: 50px; height: 12px; margin-top: -4px; fill: none; stroke: #777; stroke-width: 1.6; }

/* Toolbars */
.toolrow { display: flex; height: 28px; }
.toolrow.second { padding-left: 373px; }
.group {
  display: flex;
  align-items: center;
  height: 28px;
  padding-left: 8px;
  border-right: 1px solid #b4b4b4;
  border-bottom: 1px solid #b4b4b4;
  background: repeating-linear-gradient(#aaa 0 2px, transparent 2px 4px) 3px 6px / 2px 16px no-repeat;
}
.group > svg { width: 22px; height: 20px; margin: 0 2px; }
.push1 { margin-left: 336px; }
.vsep { width: 1px; height: 16px; background: #aaa; margin-right: 3px; }
.group .w72 { width: 72px; margin-right: -2px; }
.group .w137 { width: 137px; margin-right: -1px; }
.w145 { width: 145px; }
.grey { color: #a4a4a4; }
.tan { color: #6b5426; --f: #d9b684; }
.olive { color: #6e5f1e; }
.yellow { color: #8a6410; --f: url(#gold); }
.navy { color: #123f80; }
.black { color: #000; }
.slate { color: #3c4a78; }
.mirror { transform: scaleX(-1); }
.tri-down { width: 0; border: 5px solid transparent; border-top: 6px solid #000; border-bottom: 0; margin-right: 4px; margin-left: 0; }
.t-info { font: italic 700 17px "Liberation Serif", serif; fill: #fff; }
.fmt { position: relative; width: 47px; padding-left: 2px; white-space: nowrap; }
.fmt svg { position: absolute; left: 15px; top: -2px; width: 18px; height: 19px; }
.fmt span { position: relative; }
.axes text { font: 700 8px "Liberation Sans", sans-serif; fill: #b8351a; }
.axes b { width: 26px; text-align: center; color: #c02c0c; font: 700 18px "Liberation Sans", sans-serif; }

/* Combos */
.combo {
  position: relative;
  display: flex;
  align-items: center;
  height: 24px;
  padding-left: 3px;
  padding-right: 2px;
  border: 1px solid #a6a6a6;
  background: #fff;
  white-space: nowrap;
}
.combo.blue { background: #b8dcff; }
.blue .drop { background: #c4d8ec; border-color: #b4c6da; }
.blue .drop::after { border-color: #a4b4c6; }
.drop {
  width: 11px;
  height: 20px;
  margin-left: auto;
  border: 1px solid #b8b8b8;
  background: #efefef;
  display: flex;
  align-items: center;
  justify-content: center;
}
.drop::after {
  content: "";
  width: 5px;
  height: 5px;
  border: solid #444;
  border-width: 0 1px 1px 0;
  transform: translateY(-2px) rotate(45deg);
}
.spin { width: 9px; height: 20px; margin-right: 3px; display: flex; flex-direction: column; align-items: center; justify-content: center; gap: 5px; }
.spin::before, .spin::after { content: ""; border: 3px solid transparent; }
.spin::before { border-top: 0; border-bottom: 4px solid #000; }
.spin::after { border-bottom: 0; border-top: 4px solid #000; }
.spin.box { border: 1px solid #aaa; }
.spin.half { border: 1px solid #ccc; }
.spin.half::after, .spin.dim::after { border-top-color: #888; }
.spin.dim::before { border-bottom-color: #888; }
.spin.dim { margin-right: 2px; }
.spin.big { margin: 0; gap: 6px; width: 10px; }
.spin.big::before, .spin.big::after { border-width: 5px; }
.spin.big::before { border-top: 0; border-bottom: 6px solid #999; }
.spin.big::after { border-bottom: 0; border-top: 6px solid #999; }

/* Main area */
.main { display: flex; height: 794px; }
.side { width: 228px; padding: 7px 0 4px 2px; display: flex; flex-direction: column; }
.tabs { display: flex; align-items: flex-end; height: 25px; width: 219px; border-bottom: 1px solid #ddd; }
.tab { width: 39px; height: 22px; border: 1px solid #ddd; border-bottom: 0; text-align: center; line-height: 22px; }
.tab.active { width: 42px; height: 25px; line-height: 24px; background: #fff; margin-bottom: -1px; }
.side-tools { width: 218px; height: 33px; padding: 6px 0 0 3px; display: flex; align-items: flex-start; border-right: 1px solid #e2e2e2; }
.side-tools > svg { width: 17px; height: 17px; margin-top: 3px; }
.side-tools > svg:nth-of-type(1) { margin-left: 9px; }
.side-tools > svg:nth-of-type(2) { margin-left: 10px; }
.side-tools > svg:nth-of-type(3) { margin-left: 9px; width: 18px; }
.dbcombo { width: 121px; height: 23px; padding-left: 2px; padding-right: 1px; }
.dbcombo svg { width: 17px; height: 17px; margin-right: 4px; }
.side-tools .spin { margin: 1px 0 0 6px; }

.treebox { margin-left: 3px; width: 216px; height: 724px; border: 1px solid #a6a6a6; display: flex; flex-direction: column; }
.tree-row { height: 705px; display: flex; overflow: hidden; }
.tree { width: 198px; overflow: hidden; white-space: nowrap; letter-spacing: 0.1px; }
.n { display: flex; align-items: center; height: 21px; position: relative; }
.n svg { width: 16px; height: 16px; margin-right: 6px; }
.l0 { padding-left: 2px; }
.l1 { padding-left: 20px; }
.l2 { padding-left: 38px; }
.wide { letter-spacing: 0.2px; }
.exp {
  width: 9px;
  height: 9px;
  margin-right: 3px;
  border: 1px solid #8c8c8c;
  background: linear-gradient(#333, #333) 1px 3px / 5px 1px no-repeat, linear-gradient(#333, #333) 3px 1px / 1px 5px no-repeat, #fff;
}
.exp.minus { background: linear-gradient(#333, #333) 1px 3px / 5px 1px no-repeat, #fff; }
.leaf { width: 5px; height: 1px; margin-left: 4px; margin-right: 3px; border-top: 1px dotted #999; }
.branch { position: relative; }
.branch::before { content: ""; position: absolute; top: 0; bottom: 10px; border-left: 1px dotted #999; }
.root::before { left: 6px; bottom: 0; }
.kids::before { left: 42px; }
.jobs::before { left: 24px; }
.branch .exp { z-index: 1; }
.current { border-bottom: 2px solid #000; line-height: 16px; margin-left: 3px; margin-top: 2px; font-size: 12.500px; }
.sel { background: #0a6cd6; color: #fff; line-height: 20px; padding: 0 3px 0 2px; margin-left: -2px; }
.green { --c: #2a8a3a; }
.t-s { font: 700 8px "DejaVu Sans", sans-serif; }
.t-f { font: 700 17px "DejaVu Sans", sans-serif; }
.t-a { font: italic 700 9px "Liberation Sans", sans-serif; }

.vscroll { width: 16px; display: flex; flex-direction: column; align-items: center; }
.vscroll .thumb { width: 15px; background: #dadada; }
.tree-row .vscroll .thumb { height: 662px; flex: none; }
.chev { width: 16px; height: 17px; display: flex; align-items: center; justify-content: center; }
.chev::after { content: ""; width: 6px; height: 6px; border: solid #555; border-width: 0 2px 2px 0; transform: translateY(-2px) rotate(45deg); }
.chev.up::after { transform: translateY(2px) rotate(225deg); }
.chev.left::after { transform: translateX(2px) rotate(135deg); }
.chev.right::after { transform: translateX(-1px) rotate(-45deg); }
.tree-row .chev:last-child { height: 18px; margin-top: 9px; }
.hscroll { display: flex; height: 17px; align-items: center; }
.hscroll .left { width: 17px; }
.hscroll .thumb { width: 147px; height: 15px; background: #dadada; margin-right: 16px; }

.work { flex: 1; display: flex; flex-direction: column; }
.modbar { height: 32px; display: flex; align-items: center; padding-left: 6px; }
.modbar label { width: 33px; white-space: nowrap; }
.modbar .m2 { width: 32px; margin-left: 13px; }
.modbar .m3 { width: 44px; margin-left: 12px; }
.sunken { width: 98px; padding-left: 2px; border: 1px solid #888; border-right-color: #bbb; border-bottom-color: #bbb; }

.canvas-row { display: flex; height: 724px; }
.toolbox { width: 61px; padding-top: 1px; }
.tb { display: grid; grid-template-columns: 29px 27px; grid-auto-rows: 27.500px; width: 58px; padding: 4px 0 3px 1px; border-bottom: 1px solid #aaa; align-items: center; justify-items: center; }
.tb.tall { grid-auto-rows: 33px; padding: 0 0 0 1px; }
.tb:last-child { border: 0; }
.tb svg { width: 20px; height: 20px; }
.tb svg:nth-child(even) { width: 21px; }
.tb .on { width: 26px; height: 26px; padding: 3px; background: #d3eafb; outline: 1px solid #a6d2f4; outline-offset: -1px; }
.rain { color: #357; --f: url(#rainbow); }
.gp { fill: url(#gold); stroke: #7a5a1c; }
.xyz { font: 700 8px "Liberation Sans", sans-serif; }

.viewport {
  position: relative;
  flex: 1;
  background: linear-gradient(#0d213e 0%, #182c4b 35%, #20365a 60%, #45597b 69%, #6b7f9d 81%, #8b9cbc 91%, #a8b9d8 100%);
  border-top: 1px solid #222;
}
.scene { position: absolute; left: 0; top: -1px; width: 1631px; height: 724px; }
.bc-line { stroke: #ffff40; stroke-width: 1.200; fill: none; }
.bc-dot { fill: #6d7d20; stroke: #ffff30; stroke-width: 1.500; }
.bc-mark { stroke: #ffff30; fill: none; stroke-width: 1.300; }
.bc-cone { fill: #d8742c; fill-opacity: 0.8; stroke: #ff7a10; }
.bc-cone.red { fill: #e84828; stroke: #ff4418; stroke-dasharray: 1 1; }
.dash { stroke-dasharray: 1.500 1.500; stroke: #f0c050; }
.dim { fill: #985038; stroke: #f2b040; stroke-dasharray: 1.500 1; }
.datum { font: 12px "Liberation Serif", serif; fill: #f4f450; }
.compass { font: 9px "Liberation Sans", sans-serif; fill: #f0e840; }
.triad { font: 12px "Open Sans", sans-serif; fill: #fff; }

/* Dialog */
.dialog {
  position: absolute;
  left: 1155px;
  top: 98px;
  width: 279px;
  height: 461px;
  background: #fff;
  border: 1px solid #555;
  box-shadow: 0 4px 14px rgba(0, 0, 0, 0.5);
  padding: 0 5px;
}
.dlg-title { display: flex; align-items: center; height: 27px; padding-left: 3px; }
.dlg-title span { margin-left: 5px; flex: 1; }
.close { width: 11px; height: 11px; margin-right: 4px; stroke: #222; }
.meta { display: grid; grid-template-columns: 48px 1fr; grid-auto-rows: 25px; align-items: center; margin-top: 4px; height: 103px; border-bottom: 1px solid #a0a0a0; margin-right: 1px; }
.f { display: flex; align-items: center; height: 29px; }
.csys { height: 31px; padding-top: 4px; }
.lab { width: 48px; display: flex; align-items: center; white-space: nowrap; }
.global { letter-spacing: 3.700px; width: 57px; margin-left: 1px; white-space: nowrap; }
.csys svg { width: 15px; height: 16px; margin-right: 10px; }
.blueink { color: #2f6fd0; }
.steelink { color: #6d88ad; }
.f .combo, .input { height: 25px; }
.input { width: 150px; border: 1px solid #a6a6a6; padding: 4px 3px; line-height: 15px; }
.input.off { background: #b8dcff; }
.input mark { background: #0a6cd6; color: #fff; }
.unit { margin-left: 6px; margin-top: -3px; }
.fx { margin: -7px 0 0 16px; font: italic 12px "Open Sans", sans-serif; -webkit-text-stroke: 0.3px #000; }
.amp { width: 16px; height: 16px; margin: -6px 0 0 16px; }
.chk { width: 13px; height: 13px; border: 1px solid #222; margin-right: 4px; position: relative; }
.chk.on::after { content: ""; position: absolute; left: 2px; top: 1.500px; width: 8px; height: 4px; border: solid #222; border-width: 0 0 1px 1px; transform: rotate(-45deg); }
.note { height: 28px; line-height: 25px; border-bottom: 1px solid #a0a0a0; }
.note b { margin-right: 7px; }
.dlg-btns { display: flex; padding: 6px 45px 0 43px; justify-content: space-between; }
.dlg-btns button { width: 42px; height: 23px; padding: 0; border: 1px solid #b0b0b0; background: #efefef; font: inherit; line-height: 20px; }
.dlg-btns .ok { border-color: #2b6f9e; background: #f3faff; }
.pointer { position: absolute; left: 61px; top: 434px; width: 12px; height: 19px; fill: #fff; stroke: #222; }

/* Prompt line */
.prompt { height: 38px; display: flex; align-items: center; padding: 0 3px 3px 5px; }
.pbtn { width: 18px; height: 22px; margin-right: 4px; border: 1px solid #b4b4b4; background: #f0f0f0; display: flex; align-items: center; justify-content: center; }
.pbtn svg { width: 14px; height: 14px; }
.ptext { margin-left: 3px; flex: 1; letter-spacing: 0.150px; }
.simulia { width: 102px; height: 22px; }
.simulia text { font: italic 900 12.500px Lato, sans-serif; fill: #0a1858; }

/* Messages */
.messages { height: 140px; display: flex; }
.msgtabs { width: 41px; padding: 6px 0 0 10px; border-top: 1px solid #ddd; }
.mt { width: 22px; height: 26px; }
.cli { width: 25px; height: 25px; margin-top: 10px; border: 1px solid #333; background: #ffe878; display: flex; align-items: center; justify-content: center; }
.cli svg { width: 18px; height: 9px; fill: none; stroke: #000; stroke-width: 1.600; }
.log { width: 1861px; height: 136px; margin-top: 1px; border: 1px solid #a6a6a6; display: flex; justify-content: space-between; overflow: hidden; }
.log pre {
  margin: 1px 0 0 4px;
  width: 900px;
  font: 13px/13px "Noto Sans CJK SC", monospace;
  font-weight: 300;
  font-feature-settings: "hwid";
  transform: scaleX(1.2308);
  transform-origin: left;
}
.log .thumb { height: 50px; margin-top: 50px; }
.log .chev:last-child { height: 18px; }
.grip { width: 14px; height: 14px; margin: auto 3px 3px 2px; stroke: #999; stroke-width: 2; }

/* Taskbar */
.taskbar { height: 40px; background: #000; display: flex; color: #fff; }
.sys { display: flex; align-items: center; width: 146px; padding-left: 16px; gap: 32px; }
.sys svg { width: 16px; height: 16px; }
.wl { fill: none; stroke: #fff; stroke-width: 1.200; }
.apps { display: flex; }
.apps span { width: 49px; padding: 0 4px; display: flex; align-items: center; justify-content: center; position: relative; }
.apps svg { width: 24px; height: 24px; }
.apps .run::after { content: ""; position: absolute; left: 4px; right: 4px; bottom: 0; height: 2px; background: #76b9ed; }
.apps .cur { background: #3a3a3a; }
.apps .cur::after { left: 0; right: 0; }
.t-cmd { font: 7px "Liberation Mono", monospace; fill: #fff; }
.tray { margin-left: auto; width: 252px; display: flex; align-items: center; }
.tray > svg { width: 16px; height: 16px; margin-right: 8px; }
.tray .ppl { margin-right: 20px; }
.ime { font-size: 13px; width: 24px; margin-left: 1px; }
.clock { width: 58px; display: flex; flex-direction: column; align-items: center; line-height: 19px; }
.notif { position: relative; margin-left: 20px; }
.notif svg { width: 16px; height: 16px; }
.badge { position: absolute; left: 7px; top: 6px; width: 17px; height: 17px; border-radius: 50%; background: #333; border: 1px solid #888; text-align: center; line-height: 14px; font-weight: 700; }
```
